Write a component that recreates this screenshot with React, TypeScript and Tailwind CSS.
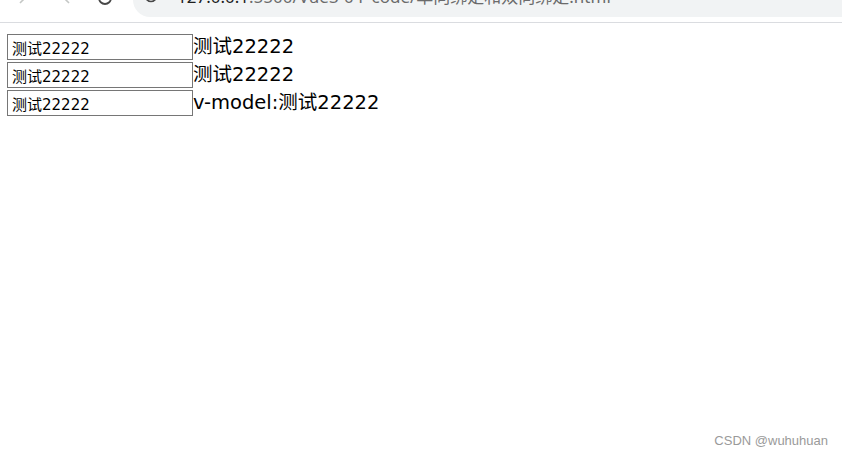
import { useState } from "react";

export default function App() {
  const [texto, setTexto] = useState("测试22222");

  const fuente = { fontFamily: '"DejaVu Sans", "Noto Sans CJK SC", sans-serif' };

  return (
    <div className="relative w-[842px] h-[458px] overflow-hidden bg-white text-black" style={fuente}>
      {/* barra del navegador (recortada) */}
      <div className="flex h-[23px] border-b border-[#dadce0] bg-white">
        <div className="flex w-[133px] items-start pl-[18px]">
          <svg width="10" height="6" viewBox="0 0 10 6">
            <path d="M6 -1 L2 3" stroke="#c4c7c5" strokeWidth="1.6" fill="none" />
          </svg>
          <svg width="10" height="6" viewBox="0 0 10 6" className="ml-[34px]">
            <path d="M3 -1 L7 3" stroke="#c4c7c5" strokeWidth="1.6" fill="none" />
          </svg>
          <svg width="16" height="7" viewBox="0 0 16 7" className="ml-[25px]">
            <path d="M2 -2 A6 6 0 0 0 14 -2" stroke="#474747" strokeWidth="1.8" fill="none" />
          </svg>
        </div>
        <div className="flex h-[17px] flex-1 items-start overflow-hidden rounded-bl-[17px] bg-[#f1f3f4] pl-[11px]">
          <svg width="14" height="5" viewBox="0 0 14 5">
            <path d="M1.5 -4 A5.5 5.5 0 0 0 12.5 -4" stroke="#474747" strokeWidth="1.6" fill="none" />
          </svg>
          <div
            className="-mt-[12px] ml-[19px] whitespace-nowrap text-[17px] leading-[17px] text-[#6b6b6b]"
            style={{ fontFamily: '"Noto Sans", "Noto Sans CJK SC", sans-serif' }}
          >
            <span className="text-[#1f1f1f]">127.0.0.1</span>:5500/Vue3-0 F code/单向绑定和双向绑定.html
          </div>
        </div>
      </div>

      {/* contenido */}
      <div className="flex flex-col gap-[2px] pl-[7px] pt-[11px]">
        <div className="flex h-[26px] items-center">
          <input
            value={texto}
            readOnly
            className="h-[26px] w-[186px] border border-[#767676] px-[4px] text-[15px] leading-none outline-none"
            style={fuente}
          />
          <span className="text-[19.5px] leading-none">{texto}</span>
        </div>
        <div className="flex h-[26px] items-center">
          <input
            value={texto}
            readOnly
            className="h-[26px] w-[186px] border border-[#767676] px-[4px] text-[15px] leading-none outline-none"
            style={fuente}
          />
          <span className="text-[19.5px] leading-none">{texto}</span>
        </div>
        <div className="flex h-[26px] items-center">
          <input
            value={texto}
            onChange={(e) => setTexto(e.target.value)}
            className="h-[26px] w-[186px] border border-[#767676] px-[4px] text-[15px] leading-none outline-none"
            style={fuente}
          />
          <span className="text-[19.5px] leading-none">v-model:{texto}</span>
        </div>
      </div>

      {/* marca de agua */}
      <div
        className="absolute bottom-[8px] right-[14px] text-[13px] text-[#9a9a9a]"
        style={{ fontFamily: '"Liberation Sans", Arial, sans-serif' }}
      >
        CSDN @wuhuhuan
      </div>
    </div>
  );
}
